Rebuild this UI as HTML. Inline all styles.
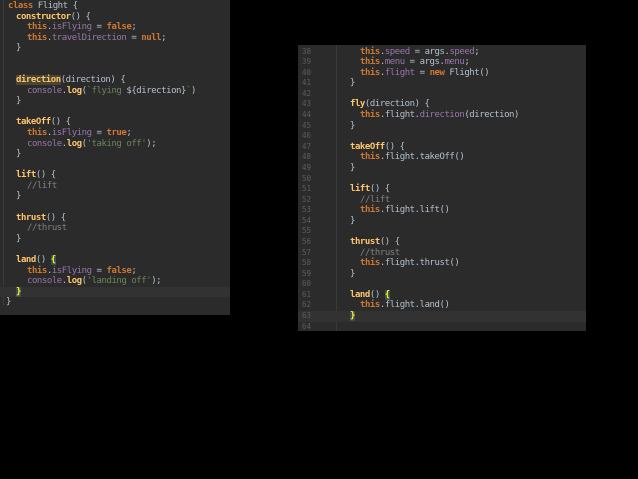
<!DOCTYPE html>
<html><head><meta charset="utf-8"><style>
body{margin:0;width:638px;height:479px;background:#000;overflow:hidden;position:relative;font-family:"DejaVu Sans Mono","Liberation Mono",monospace;}
.p{position:absolute;background:#2b2b2b;}
.l{position:absolute;height:10.58px;line-height:10.58px;font-size:9px;letter-spacing:-0.45px;color:#b4c0cc;white-space:pre;left:0;right:0;}
.k{color:#cc7832;font-weight:bold}
.pr{color:#9876aa}
.f{color:#ffc66d;font-weight:bold}
.s{color:#6a8759}
.c{color:#808080}
.n{position:absolute;left:4px;color:#5a5d60;font-size:7.5px;letter-spacing:0}
.hl{background:#323232}
.br{color:#ffef28;background:#3b514d;font-weight:bold}
</style></head><body>
<div class="p" style="left:0;top:0;width:230px;height:315px">
<div style="position:absolute;left:3px;top:0;width:1px;height:305px;background:#3a3a3a"></div>
<div style="position:absolute;left:0;top:1px;right:0">
<div class="l" style="top:0"><span style="position:absolute;left:8px"><span class="k">class</span> Flight {</span></div>
<div class="l" style="top:10.6px"><span style="position:absolute;left:16px"><span class="f">constructor</span>() {</span></div>
<div class="l" style="top:21.2px"><span style="position:absolute;left:27px"><span class="k">this</span>.<span class="pr">isFlying</span> = <span class="k">false</span>;</span></div>
<div class="l" style="top:31.7px"><span style="position:absolute;left:27px"><span class="k">this</span>.<span class="pr">travelDirection</span> = <span class="k">null</span>;</span></div>
<div class="l" style="top:42.3px"><span style="position:absolute;left:16px">}</span></div>
<div class="l" style="top:74.1px"><span style="position:absolute;left:16px"><span class="f" style="background:#4a4630">direction</span>(direction) {</span></div>
<div class="l" style="top:84.6px"><span style="position:absolute;left:27px"><span class="pr">console</span>.<span class="f">log</span>(<span class="s">`flying </span>${direction}<span class="s">`</span>)</span></div>
<div class="l" style="top:95.2px"><span style="position:absolute;left:16px">}</span></div>
<div class="l" style="top:116.4px"><span style="position:absolute;left:16px"><span class="f">takeOff</span>() {</span></div>
<div class="l" style="top:127px"><span style="position:absolute;left:27px"><span class="k">this</span>.<span class="pr">isFlying</span> = <span class="k">true</span>;</span></div>
<div class="l" style="top:137.5px"><span style="position:absolute;left:27px"><span class="pr">console</span>.<span class="f">log</span>(<span class="s">'taking off'</span>);</span></div>
<div class="l" style="top:148.1px"><span style="position:absolute;left:16px">}</span></div>
<div class="l" style="top:169.3px"><span style="position:absolute;left:16px"><span class="f">lift</span>() {</span></div>
<div class="l" style="top:179.9px"><span style="position:absolute;left:27px" class="c">//lift</span></div>
<div class="l" style="top:190.4px"><span style="position:absolute;left:16px">}</span></div>
<div class="l" style="top:211.6px"><span style="position:absolute;left:16px"><span class="f">thrust</span>() {</span></div>
<div class="l" style="top:222.2px"><span style="position:absolute;left:27px" class="c">//thrust</span></div>
<div class="l" style="top:232.7px"><span style="position:absolute;left:16px">}</span></div>
<div class="l" style="top:253.9px"><span style="position:absolute;left:16px"><span class="f">land</span>() <span class="br">{</span></span></div>
<div class="l" style="top:264.5px"><span style="position:absolute;left:27px"><span class="k">this</span>.<span class="pr">isFlying</span> = <span class="k">false</span>;</span></div>
<div class="l" style="top:275px"><span style="position:absolute;left:27px"><span class="pr">console</span>.<span class="f">log</span>(<span class="s">'landing off'</span>);</span></div>
<div class="l hl" style="top:285.6px"><span style="position:absolute;left:16px" class="br">}</span></div>
<div class="l" style="top:296.2px"><span style="position:absolute;left:6px">}</span></div>
</div>
</div>

<div class="p" style="left:298px;top:45px;width:288px;height:286px">
<div style="position:absolute;left:38px;top:0;width:1px;height:286px;background:#3a3a3a"></div>
<div id="r"></div>
</div>
<script>
var L=[
[1,'<span class="k">this</span>.<span class="pr">speed</span> = args.<span class="pr">speed</span>;'],
[1,'<span class="k">this</span>.<span class="pr">menu</span> = args.<span class="pr">menu</span>;'],
[1,'<span class="k">this</span>.<span class="pr">flight</span> = <span class="k">new</span> Flight()'],
[0,'}'],[0,''],
[0,'<span class="f">fly</span>(direction) {'],
[1,'<span class="k">this</span>.flight.<span class="pr">direction</span>(direction)'],
[0,'}'],[0,''],
[0,'<span class="f">takeOff</span>() {'],
[1,'<span class="k">this</span>.flight.takeOff()'],
[0,'}'],[0,''],
[0,'<span class="f">lift</span>() {'],
[1,'<span class="c">//lift</span>'],
[1,'<span class="k">this</span>.flight.lift()'],
[0,'}'],[0,''],
[0,'<span class="f">thrust</span>() {'],
[1,'<span class="c">//thrust</span>'],
[1,'<span class="k">this</span>.flight.thrust()'],
[0,'}'],[0,''],
[0,'<span class="f">land</span>() <span class="br">{</span>'],
[1,'<span class="k">this</span>.flight.land()'],
[0,'<span class="br">}</span>'],[0,'']];
var h='';
for(var i=0;i<L.length;i++){
h+='<div class="l'+(i==25?' hl':'')+'" style="top:'+(1.5+i*10.58).toFixed(1)+'px"><span class="n">'+(38+i)+'</span><span style="position:absolute;left:'+(L[i][0]?62:52)+'px">'+L[i][1]+'</span></div>';
}
document.getElementById('r').innerHTML=h;
</script>
</body></html>
